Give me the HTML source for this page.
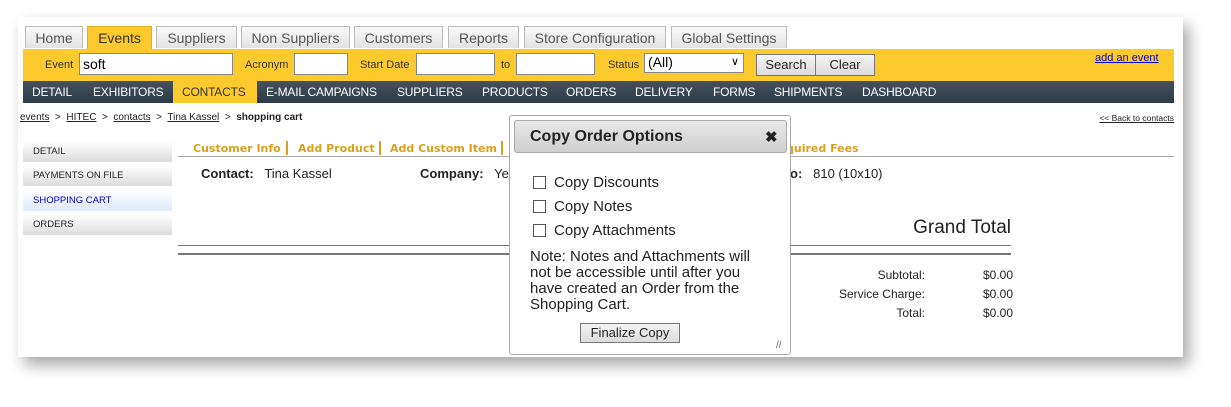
<!DOCTYPE html>
<html><head><style>
body{margin:0;width:1231px;height:407px;background:#fff;position:relative;overflow:hidden;font-family:"Liberation Sans",sans-serif;}
.a{position:absolute;white-space:nowrap}
.panel{position:absolute;left:18px;top:17px;width:1165px;height:340px;background:#fff;box-shadow:6px 8px 14px rgba(0,0,0,.35);}
.tab{position:absolute;top:26px;height:22px;border:1px solid #bbb;border-bottom:none;background:linear-gradient(#fafafa,#e2e2e2);font-size:14px;color:#555;text-align:center;line-height:22px;box-sizing:border-box}
.inp{position:absolute;height:22px;background:#fff;border:1px solid #888;box-sizing:border-box;font-size:14px;padding-left:3px;line-height:20px}
.lbl{position:absolute;top:59px;font-size:11px;color:#333}
.nav{position:absolute;top:85px;font-size:12px;color:#fff;letter-spacing:-0.2px}
.side{position:absolute;left:23px;width:149px;height:21px;background:linear-gradient(#fff,#dcdcdc);font-size:9.5px;line-height:21px;padding-left:10px;box-sizing:border-box;color:#222}
.btn{position:absolute;top:54px;height:22px;border:1px solid #777;background:linear-gradient(#f4f4f4,#dcdcdc);font-size:13px;text-align:center;line-height:20px;box-sizing:border-box;color:#222}
.cb{position:absolute;left:533px;width:11px;height:11px;border:1px solid #555;background:#fff}
.sub{position:absolute;top:142px;font-size:11px;font-weight:bold;color:#d9a11a;font-family:"DejaVu Sans",sans-serif}
</style></head><body>
<div class="panel"></div>
<div class="tab" style="left:25px;width:58px">Home</div>
<div class="tab" style="left:87px;width:65px;background:#fdc92c;border-color:#e0b020;color:#333;height:24px">Events</div>
<div class="tab" style="left:156px;width:81px">Suppliers</div>
<div class="tab" style="left:241px;width:109px">Non Suppliers</div>
<div class="tab" style="left:354px;width:89px">Customers</div>
<div class="tab" style="left:448px;width:71px">Reports</div>
<div class="tab" style="left:524px;width:142px">Store Configuration</div>
<div class="tab" style="left:671px;width:116px">Global Settings</div>
<div class="a" style="left:23px;top:49px;width:1151px;height:32px;background:#fdca2e"></div>
<div class="lbl" style="left:45px">Event</div>
<div class="inp" style="left:79px;top:53px;width:154px">soft</div>
<div class="lbl" style="left:245px">Acronym</div>
<div class="inp" style="left:294px;top:53px;width:54px"></div>
<div class="lbl" style="left:360px">Start Date</div>
<div class="inp" style="left:416px;top:53px;width:79px"></div>
<div class="lbl" style="left:501px">to</div>
<div class="inp" style="left:516px;top:53px;width:79px"></div>
<div class="lbl" style="left:608px">Status</div>
<div class="inp" style="left:644px;top:53px;width:100px;height:20px;line-height:17px">(All)<span style="position:absolute;right:4px;top:0;font-size:11px">&#x2228;</span></div>
<div class="btn" style="left:756px;width:60px">Search</div>
<div class="btn" style="left:815px;width:60px">Clear</div>
<div class="a" style="left:1095px;top:52px;font-size:11px;color:#00c;text-decoration:underline">add an event</div>
<div class="a" style="left:23px;top:81px;width:1151px;height:22px;background:linear-gradient(#45525d,#2e3b46)"></div>
<div class="a" style="left:173px;top:81px;width:84px;height:22px;background:#fdca2e"></div>
<div class="nav" style="left:32px">DETAIL</div>
<div class="nav" style="left:93px">EXHIBITORS</div>
<div class="nav" style="left:182px;color:#333">CONTACTS</div>
<div class="nav" style="left:266px">E-MAIL CAMPAIGNS</div>
<div class="nav" style="left:397px">SUPPLIERS</div>
<div class="nav" style="left:482px">PRODUCTS</div>
<div class="nav" style="left:566px">ORDERS</div>
<div class="nav" style="left:635px">DELIVERY</div>
<div class="nav" style="left:713px">FORMS</div>
<div class="nav" style="left:774px">SHIPMENTS</div>
<div class="nav" style="left:862px">DASHBOARD</div>
<div class="a" style="left:20px;top:112px;font-size:10px;color:#222"><u>events</u> &nbsp;&gt;&nbsp; <u>HITEC</u> &nbsp;&gt;&nbsp; <u>contacts</u> &nbsp;&gt;&nbsp; <u>Tina Kassel</u> &nbsp;&gt;&nbsp; <b>shopping cart</b></div>
<div class="a" style="left:1093px;top:113px;font-size:8.5px;color:#222;text-decoration:underline;width:81px;text-align:right">&lt;&lt; Back to contacts</div>
<div class="side" style="top:141px">DETAIL</div>
<div class="side" style="top:165px">PAYMENTS ON FILE</div>
<div class="side" style="top:190px;background:linear-gradient(#fff,#dde9fa);color:#00c">SHOPPING CART</div>
<div class="side" style="top:214px">ORDERS</div>
<div class="sub" style="left:193px">Customer Info</div>
<div class="a" style="left:286px;top:141px;width:2px;height:14px;background:#d9a11a"></div>
<div class="sub" style="left:298px">Add Product</div>
<div class="a" style="left:379px;top:141px;width:2px;height:14px;background:#d9a11a"></div>
<div class="sub" style="left:390px">Add Custom Item</div>
<div class="a" style="left:501px;top:141px;width:2px;height:14px;background:#d9a11a"></div>
<div class="sub" style="left:786px">quired Fees</div>
<div class="a" style="left:178px;top:156px;width:996px;height:1px;background:#aaa"></div>
<div class="a" style="left:201px;top:166px;font-size:13px;color:#222"><b>Contact:</b>&nbsp;&nbsp; Tina Kassel</div>
<div class="a" style="left:420px;top:166px;font-size:13px;color:#222"><b>Company:</b>&nbsp;&nbsp; Ye</div>
<div class="a" style="left:790px;top:166px;font-size:13px;color:#222"><b>o:</b>&nbsp;&nbsp; 810 (10x10)</div>
<div class="a" style="left:811px;width:200px;text-align:right;top:217px;font-size:19px;color:#222">Grand Total</div>
<div class="a" style="left:178px;top:245px;width:833px;height:1px;background:#777"></div>
<div class="a" style="left:178px;top:253px;width:833px;height:2px;background:#777"></div>
<div class="a" style="left:790px;top:266px;width:135px;text-align:right;font-size:12px;color:#222;line-height:19px">Subtotal:<br>Service Charge:<br>Total:</div>
<div class="a" style="left:960px;top:266px;width:53px;text-align:right;font-size:12px;color:#222;line-height:19px">$0.00<br>$0.00<br>$0.00</div>
<div class="a" style="left:509px;top:115px;width:282px;height:240px;background:#fff;border:1px solid #aaa;border-radius:3px;box-sizing:border-box"></div>
<div class="a" style="left:514px;top:120px;width:273px;height:33px;background:linear-gradient(#e8e8e8,#cfcfcf);border:1px solid #aaa;border-radius:3px;box-sizing:border-box"></div>
<div class="a" style="left:530px;top:128px;font-size:16px;font-weight:bold;color:#222">Copy Order Options</div>
<div class="a" style="left:765px;top:128px;font-size:15px;font-weight:bold;color:#222">&#x2716;</div>
<div class="cb" style="top:176px"></div>
<div class="a" style="left:554px;top:174px;font-size:15px;color:#222">Copy Discounts</div>
<div class="cb" style="top:200px"></div>
<div class="a" style="left:554px;top:198px;font-size:15px;color:#222">Copy Notes</div>
<div class="cb" style="top:224px"></div>
<div class="a" style="left:554px;top:222px;font-size:15px;color:#222">Copy Attachments</div>
<div class="a" style="left:530px;top:249px;font-size:15px;color:#222;line-height:16px;white-space:normal;width:238px">Note: Notes and Attachments will not be accessible until after you have created an Order from the Shopping Cart.</div>
<div class="a" style="left:580px;top:323px;width:100px;height:20px;border:1px solid #777;background:linear-gradient(#f4f4f4,#dcdcdc);box-sizing:border-box;font-size:13px;text-align:center;line-height:18px;color:#222">Finalize Copy</div>
<div class="a" style="left:776px;top:340px;font-size:10px;color:#666">//</div>
</body></html>
